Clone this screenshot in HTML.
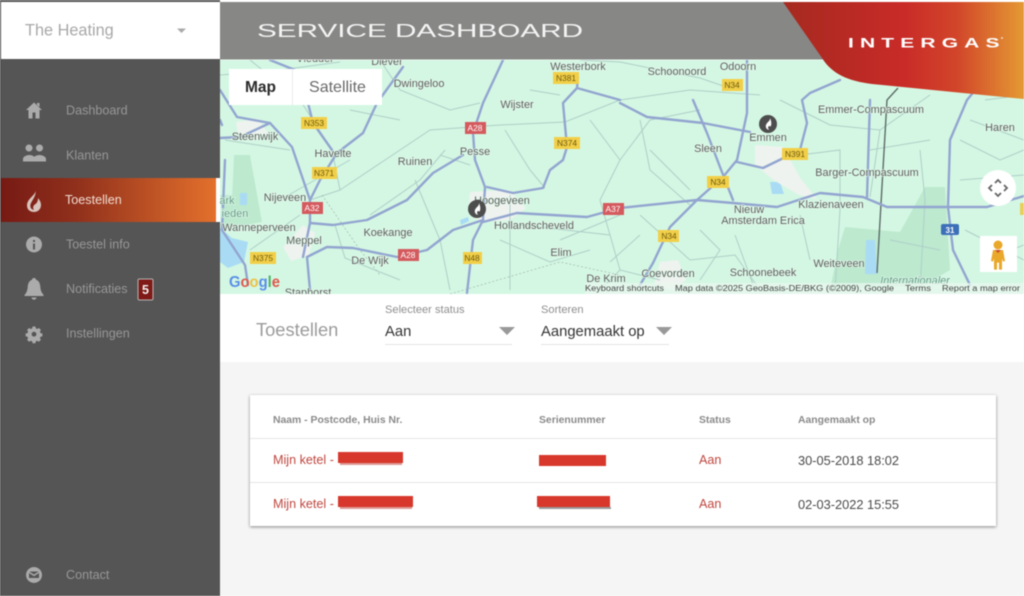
<!DOCTYPE html>
<html lang="nl"><head><meta charset="utf-8"><title>Service Dashboard</title>
<style>
html,body{margin:0;padding:0;width:1024px;height:596px;overflow:hidden;background:#fff}
#w{position:relative;width:1024px;height:596px;filter:blur(.5px);font-family:"Liberation Sans",sans-serif;overflow:hidden}
svg{position:absolute;left:0;top:0}
.rd{fill:none;stroke:#93a5d0;stroke-width:2.4;stroke-linejoin:round;stroke-linecap:round}
.mn{fill:none;stroke:#aecfc8;stroke-width:1}
.l text{font-size:10.9px;fill:#5c605e;text-anchor:middle;paint-order:stroke;stroke:#e4f8ec;stroke-width:1.2px}
.by rect{fill:#f2cf48}.by text{font-size:8.4px;fill:#6b5a10;text-anchor:middle}
.br rect{fill:#d45a5e}.br text{font-size:8.4px;fill:#fff;text-anchor:middle}
.m text{font-size:12.6px;fill:#979797}
.a{position:absolute;white-space:nowrap}
.th{font-size:10.4px;font-weight:bold;color:#8a8a8a;top:414.5px}
.td{font-size:12.6px;color:#444}
.dt{font-size:12.8px;color:#4a4a4a}
.r{color:#c0473f}
.x{position:absolute;background:#d8372c}
.u{position:absolute;height:2px;opacity:.55}
</style></head><body><div id="w">
<svg width="1024" height="596" viewBox="0 0 1024 596">
<defs>
<linearGradient id="g1" x1="0" x2="1"><stop offset="0" stop-color="#a52a20"/><stop offset=".5" stop-color="#c92b28"/><stop offset=".72" stop-color="#d2452a"/><stop offset="1" stop-color="#e49a34"/></linearGradient>
<linearGradient id="g2" x1="0" x2="1"><stop offset="0" stop-color="#761a14"/><stop offset=".35" stop-color="#90301c"/><stop offset="1" stop-color="#e3702c"/></linearGradient>
<clipPath id="mc"><rect x="220" y="60" width="804" height="234"/></clipPath>
</defs>
<g clip-path="url(#mc)">
<rect x="220" y="60" width="804" height="234" fill="#d4f7e3"/>
<g fill="#bde9cf">
<path d="M234 155 L250 155 L258 200 L262 222 L240 226 L232 200Z"/>
<path d="M845 227 L900 232 L925 187 L945 187 L950 270 L925 285 L830 290 L838 250Z"/>
<path d="M220 195H232L240 225 L224 228Z"/>
</g>
<g fill="#a9dcf4">
<path d="M220 228 L232 238 L248 242 L244 262 L228 268 L220 262Z"/>
<path d="M240 193h7v12h-7z"/>
<path d="M866 240h9l2 34h-12z"/><path d="M770 182h10l4 12h-12z"/><path d="M460 220l8-3 1 4-8 4z"/>
</g>
<g fill="#eef3ef">
<path d="M236 122l22-3 10 14-16 8-14-6z"/><path d="M303 225l12 8-6 22-18 6-8-14z"/><path d="M470 192l40-2 16 18-16 12-30 2-12-10z"/><path d="M755 145l28 2 18 32 16 20-18-4-24-14-20-16z"/><path d="M660 262l18-2 8 20-14 10-18-6z"/>
</g>
<g class="mn">
<path d="M220 75L280 70 340 62M250 60L300 100 332 150 340 190 310 200"/>
<path d="M340 190L430 130 500 125 565 122 620 100 690 90 760 95"/>
<path d="M370 215L420 180 445 150M415 180L440 240 450 290M440 155L470 165M505 130L530 170 545 188"/>
<path d="M510 195V290M520 225L610 235 620 270 600 290M560 240L620 215M620 160L650 120 700 110M620 160L600 200 620 270 660 280"/>
<path d="M380 60L400 90 450 110 480 103M580 60L620 62 700 78 735 90M650 150L690 190M640 215L690 260 735 255 760 290"/>
<path d="M735 235L755 290M800 155L840 150 840 210 835 290M870 150L930 140M870 197L880 130 930 95M920 150L925 200 920 290M970 120L1024 140M960 180L1024 175M965 230L1024 260M985 100L1024 95"/>
<path d="M280 200L350 160M250 250L300 215M335 225L345 258 400 280M225 140L290 150"/>
<path d="M640 120L650 170 690 205M780 100L830 125 880 130M960 140L1000 160 1024 150M890 240L940 250M985 260L1024 245M530 90L560 95M590 120L620 160M500 240L550 262 590 250M350 110L400 120M640 235L610 262M700 230L720 250 700 280M800 215L810 260"/>
</g>
<path d="M322 195L360 250 380 275M450 294L560 262 620 275" fill="none" stroke="#a6c0b4" stroke-width=".8" stroke-dasharray="2 2"/>
<path d="M898 88L887 100 877 273" fill="none" stroke="#5d6b68" stroke-width="1.4"/>
<g class="rd">
<path d="M503 60L483 103 473 133 475 160 485 187 483 220 473 240 467 293"/>
<path d="M483 220L453 230 427 250 397 257 353 248 327 247 307 257 310 290"/>
<path d="M220 90L237 117 270 123 292 147 310 200 310 223 303 257"/>
<path d="M463 155L433 173 407 200 367 220 333 225 310 223"/>
<path d="M308 103L313 123 332 150"/>
<path d="M403 67L377 103 363 133 337 153 320 180 310 200"/>
<path d="M578 77L577 88 563 103 567 147 563 160 550 170 543 188 513 193 487 187"/>
<path d="M577 88L620 100"/>
<path d="M483 222L517 213 587 217 620 208 697 200 733 203 777 207 820 193 863 197 887 207 950 207 987 207 1024 196"/>
<path d="M693 100L707 133 720 167 733 200"/>
<path d="M747 60V113L737 160 723 177 697 200 670 227 653 263 640 285"/>
<path d="M620 103L647 117 703 123 750 132"/>
<path d="M737 162L763 168 800 150 807 123 802 100 810 93 840 80"/>
<path d="M870 100L867 197"/>
<path d="M1000 60L967 100 950 140 948 207 953 250 970 285"/>
<path d="M220 138L240 137 270 123M225 160L222 230 245 265 248 285"/>
<path d="M270 60L300 72M220 120L222 125"/>
</g>
<g class="l">
<text x="255" y="140">Steenwijk</text><text x="333" y="157">Havelte</text><text x="415" y="165">Ruinen</text><text x="475" y="155">Pesse</text><text x="517" y="108">Wijster</text><text x="578" y="70">Westerbork</text><text x="419" y="87">Dwingeloo</text><text x="285" y="201">Nijeveen</text><text x="502" y="204">Hoogeveen</text><text x="534" y="229">Hollandscheveld</text><text x="259" y="231">Wanneperveen</text><text x="304" y="244">Meppel</text><text x="388" y="236">Koekange</text><text x="370" y="264">De Wijk</text><text x="561" y="256">Elim</text><text x="606" y="282">De Krim</text><text x="308" y="296">Staphorst</text><text x="387" y="65">Diever</text><text x="315" y="62">Vledder</text>
<text x="677" y="75">Schoonoord</text><text x="738" y="70">Odoorn</text><text x="871" y="113">Emmer-Compascuum</text><text x="1000" y="131">Haren</text><text x="768" y="141">Emmen</text><text x="708" y="152">Sleen</text><text x="867" y="176">Barger-Compascuum</text><text x="831" y="208">Klazienaveen</text><text x="749" y="213">Nieuw</text><text x="763" y="224">Amsterdam Erica</text><text x="839" y="267">Weiteveen</text><text x="668" y="277">Coevorden</text><text x="763" y="276">Schoonebeek</text>
<text x="915" y="284" style="fill:#5f9a83;font-style:italic">Internationaler</text><text x="227" y="204" style="fill:#5f9a83">ark</text><text x="235" y="217" style="fill:#5f9a83">ieden</text>
</g>
<g class="by">
<rect x="553" y="72" width="26" height="12"/><text x="566" y="81">N381</text><rect x="301" y="117" width="26" height="12"/><text x="314" y="126">N353</text><rect x="554" y="137" width="26" height="12"/><text x="567" y="146">N374</text><rect x="312" y="167" width="25" height="12"/><text x="324" y="176">N371</text><rect x="463" y="252" width="19" height="12"/><text x="472" y="261">N48</text><rect x="250" y="252" width="26" height="12"/><text x="263" y="261">N375</text><rect x="722" y="79" width="21" height="12"/><text x="732" y="88">N34</text><rect x="782" y="148" width="26" height="12"/><text x="795" y="157">N391</text><rect x="707" y="176" width="22" height="12"/><text x="718" y="185">N34</text><rect x="658" y="230" width="21" height="12"/><text x="669" y="239">N34</text>
</g>
<g class="br">
<rect x="465" y="122" width="21" height="12"/><text x="475" y="131">A28</text><rect x="302" y="202" width="21" height="12"/><text x="312" y="211">A32</text><rect x="398" y="249" width="21" height="12"/><text x="408" y="258">A28</text><rect x="603" y="203" width="21" height="12"/><text x="613" y="212">A37</text><rect x="1020" y="203" width="10" height="12" style="fill:#e8cf58"/>
</g>
<rect x="941" y="224" width="18" height="11" rx="2" fill="#3d6fb8"/><text x="950" y="233" font-size="8" font-weight="bold" fill="#fff" text-anchor="middle">31</text>
<g><circle cx="477" cy="209" r="9" fill="#4d4d4d"/><path d="M479 203c.6 3.4-4.6 4.8-4.2 8.6.2 2 2 3.4 3.6 3-2-1-1.6-3 0-4 0 1 1 1.2 1.4.4 1-2 .4-5.6-.8-8z" fill="#fff"/>
<circle cx="768" cy="124" r="9" fill="#4d4d4d"/><path d="M770 118c.6 3.4-4.6 4.8-4.2 8.6.2 2 2 3.4 3.6 3-2-1-1.6-3 0-4 0 1 1 1.2 1.4.4 1-2 .4-5.6-.8-8z" fill="#fff"/></g>
<rect x="585" y="283" width="439" height="11" fill="#e9f7ef" opacity=".75"/>
<g font-size="8.7" fill="#444"><text x="585" y="291" textLength="79" lengthAdjust="spacingAndGlyphs">Keyboard shortcuts</text><text x="675" y="291" textLength="219" lengthAdjust="spacingAndGlyphs">Map data ©2025 GeoBasis-DE/BKG (©2009), Google</text><text x="905" y="291" textLength="26" lengthAdjust="spacingAndGlyphs">Terms</text><text x="942" y="291" textLength="78" lengthAdjust="spacingAndGlyphs">Report a map error</text></g>
<text x="229" y="287" font-size="15.5" font-weight="bold" textLength="51" lengthAdjust="spacingAndGlyphs"><tspan fill="#5a8fe8">G</tspan><tspan fill="#e0584c">o</tspan><tspan fill="#eec143">o</tspan><tspan fill="#5a8fe8">g</tspan><tspan fill="#4fb168">l</tspan><tspan fill="#e0584c">e</tspan></text>
<rect x="229" y="69" width="153" height="36" fill="#fff"/><rect x="292" y="69" width="1" height="36" fill="#ececec"/>
<text x="260.5" y="92" font-size="15.5" font-weight="bold" fill="#2a2a2a" text-anchor="middle">Map</text>
<text x="337.5" y="92" font-size="16" fill="#6a6a6a" text-anchor="middle">Satellite</text>
<circle cx="998" cy="188" r="18" fill="#fff"/>
<path d="M995 183l3-3 3 3M995 193l3 3 3-3M992 185l-3 3 3 3M1004 185l3 3-3 3" fill="none" stroke="#666" stroke-width="1.8"/>
<rect x="980" y="236" width="37" height="36" fill="#fff"/>
<circle cx="998" cy="245" r="4.5" fill="#eaa82a"/>
<path d="M993 250h10l2 11-2 .6-1-3v11h-3v-7h-2v7h-3v-11l-1 3-2-.6z" fill="#eaa82a"/><path d="M995 250l3 3 3-3z" fill="#c8482c"/>
</g>
<rect x="220" y="2" width="620" height="57.5" fill="#878786"/>
<path d="M783 2H1024V99L872 84C848 81 832 74 822 58Z" fill="url(#g1)"/>
<text x="257" y="37" font-size="18" fill="#f4f4f4" textLength="326" lengthAdjust="spacingAndGlyphs">SERVICE DASHBOARD</text>
<g transform="translate(848 47.5) scale(1.5 1)"><text x="0" y="0" font-size="14" font-weight="bold" fill="#fff" textLength="101" lengthAdjust="spacing">INTERGAS</text></g>
<circle cx="1002" cy="38" r="1" fill="#f3d9c4"/>
<rect x="0" y="0" width="220" height="596" fill="#555"/>
<rect x="1" y="2" width="219" height="57" fill="#fff"/>
<rect x="0" y="0" width="1" height="596" fill="#444"/>
<rect x="216" y="178" width="4" height="44" fill="#fff"/>
<rect x="1" y="178" width="215" height="44" fill="url(#g2)"/>
<text x="25" y="35.5" font-size="16.3" fill="#a8a8a8">The Heating</text>
<path d="M177 28.5h9l-4.5 4.5z" fill="#aaa"/>
<g class="m">
<text x="66" y="114.5">Dashboard</text><text x="66" y="159.5">Klanten</text><text x="65" y="204" style="fill:#f2dcd2">Toestellen</text><text x="66" y="248.5">Toestel info</text><text x="66" y="293">Notificaties</text><text x="66" y="337.5">Instellingen</text><text x="66" y="579">Contact</text>
</g>
<g fill="#ababab">
<path d="M34 102.5L26 110h2.5v8.5h4v-6h3v6h4V110H42z"/><path d="M37 103h2.500v4l-2.500-2z"/>
<path d="M29 151a3.500 3.500 0 1 1 .01 0zM39.500 151a3.500 3.500 0 1 1 .01 0zM23 161v-2.500c0-2.600 4-4 6.300-4 1.500 0 3.700.6 5 1.700 1.300-1 3.500-1.700 5.200-1.700 2.400 0 6.500 1.400 6.500 4V161z" transform="translate(0 .5)"/>
<path d="M34 236.500a8 8 0 1 0 .01 0zm-1 3.500h2v2h-2zm0 3.500h2v6h-2z" fill-rule="evenodd"/>
<path d="M34 278c1.500 0 2 1 2 1.800 3 1 4 3.500 4.300 7 .3 3.500 1.200 6 3.200 8v1.200h-19V295c2-2 2.900-4.500 3.200-8 .3-3.500 1.300-6 4.300-7.200 0-.8.500-1.800 2-1.800zM31.500 297.500h5a2.500 2.200 0 0 1-5 0z"/>
<path d="M32.600 326.500h2.800l.4 1.900 1.400.6 1.700-1 2 2-1 1.700.6 1.400 1.900.4v2.800l-1.900.4-.6 1.400 1 1.700-2 2-1.700-1-1.400.6-.4 1.900h-2.800l-.4-1.900-1.400-.6-1.700 1-2-2 1-1.700-.6-1.400-1.900-.4v-2.800l1.900-.4.6-1.400-1-1.700 2-2 1.700 1 1.400-.6zM34 331.800a2.400 2.400 0 1 0 .01 0z" fill-rule="evenodd"/>
<path d="M34 567a8 8 0 1 0 .01 0zM29.300 571.500h9.400l-4.700 3zM29 573l5 3.200 5-3.200v5h-10z" fill-rule="evenodd"/>
</g>
<path d="M35.500 190C36.500 195 27 198 27 205.500 27 209.500 30 212 34 212 38 212 41 209 41 205 41 202 39.500 200 38 198 38 201 37 203 35.500 204 33 205.500 32.500 208 34 210 30.500 209.500 29.500 206 31 203 33 199 36.500 195 35.500 190Z" fill="#d8c4bd"/>
<rect x="138" y="279" width="15" height="21" rx="1.5" fill="#7f1a16" stroke="#b5b5b5" stroke-width="1"/>
<text x="145.5" y="294" font-size="12.5" font-weight="bold" fill="#f2f2f2" text-anchor="middle">5</text>
<rect x="220" y="294" width="804" height="68" fill="#fff"/>
<rect x="220" y="362" width="804" height="234" fill="#f5f5f5"/>
</svg>
<div class="a" style="left:256px;top:319px;font-size:18.3px;color:#9b9b9b">Toestellen</div>
<div class="a" style="left:385px;top:304px;font-size:11.1px;color:#8e8e8e">Selecteer status</div>
<div class="a" style="left:385px;top:323.5px;font-size:14.8px;color:#333">Aan</div>
<div class="a" style="left:499px;top:327px;width:0;height:0;border:8px solid transparent;border-top:8px solid #999;border-bottom:0"></div>
<div class="a" style="left:385px;top:344px;width:127px;height:1px;background:#e3e3e3"></div>
<div class="a" style="left:541px;top:304px;font-size:11.1px;color:#8e8e8e">Sorteren</div>
<div class="a" style="left:541px;top:323.5px;font-size:14.8px;color:#333">Aangemaakt op</div>
<div class="a" style="left:656px;top:327px;width:0;height:0;border:8px solid transparent;border-top:8px solid #999;border-bottom:0"></div>
<div class="a" style="left:541px;top:344px;width:128px;height:1px;background:#e3e3e3"></div>
<div class="a" style="left:250px;top:395px;width:746px;height:131px;background:#fff;box-shadow:0 1px 3px rgba(0,0,0,.45)"></div>
<div class="a" style="left:250px;top:438px;width:746px;height:1px;background:#e6e6e6"></div>
<div class="a" style="left:250px;top:482px;width:746px;height:1px;background:#e6e6e6"></div>
<div class="a th" style="left:273px">Naam - Postcode, Huis Nr.</div>
<div class="a th" style="left:539px">Serienummer</div>
<div class="a th" style="left:699px">Status</div>
<div class="a th" style="left:798px">Aangemaakt op</div>
<div class="a td r" style="left:273px;top:453px">Mijn ketel -</div>
<div class="a td r" style="left:273px;top:497px">Mijn ketel -</div>
<div class="a td r" style="left:699px;top:453px">Aan</div>
<div class="a td r" style="left:699px;top:497px">Aan</div>
<div class="a dt" style="left:798px;top:453px">30-05-2018 18:02</div>
<div class="a dt" style="left:798px;top:497px">02-03-2022 15:55</div>
<div class="u" style="left:340px;top:463px;width:62px;background:#c0473f"></div>
<div class="u" style="left:340px;top:507px;width:72px;background:#c0473f"></div>
<div class="u" style="left:539px;top:507px;width:72px;background:#444"></div>
<div class="x" style="left:338px;top:452px;width:65px;height:11px"></div>
<div class="x" style="left:539px;top:455px;width:67px;height:11px"></div>
<div class="x" style="left:338px;top:496px;width:75px;height:11px"></div>
<div class="x" style="left:537px;top:496px;width:73px;height:11px"></div>
</div></body></html>
